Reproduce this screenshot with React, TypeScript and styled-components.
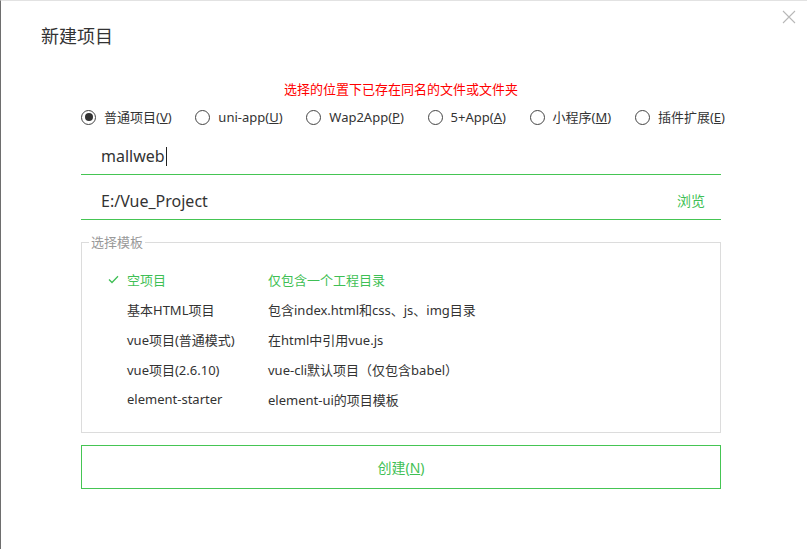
import React from "react";
import styled, { createGlobalStyle } from "styled-components";

const GlobalStyle = createGlobalStyle`
  html, body { margin: 0; padding: 0; background: #fff; }
  body {
    font-family: "Noto Sans", "Noto Sans CJK SC", sans-serif;
    color: #333;
  }
  * { box-sizing: border-box; }
`;

const GREEN = "#3fbf55";
const LINE = "#45c553";

const Dialog = styled.div`
  position: relative;
  width: 807px;
  height: 549px;
  background: #fff;
  border-left: 1px solid #6e6e6e;
  border-top: 1px solid #e2e2e2;
  overflow: hidden;
`;

const Title = styled.div`
  padding: 23px 0 0 40px;
  height: 47px;
  font-size: 18px;
  line-height: 24px;
  color: #333;
`;

const CloseButton = styled.button`
  position: absolute;
  top: 9px;
  right: 11px;
  width: 14px;
  height: 14px;
  padding: 0;
  border: 0;
  background: none;
  cursor: pointer;
  display: flex;
`;

const Content = styled.div`
  margin-left: 80px;
  width: 640px;
`;

const Warning = styled.div`
  margin-top: 32px;
  height: 18px;
  line-height: 18px;
  text-align: center;
  font-size: 13px;
  color: #ff0000;
`;

const RadioRow = styled.div`
  margin-top: 9px;
  height: 20px;
  display: flex;
  align-items: center;
  justify-content: space-between;
  width: 644px;
`;

const RadioItem = styled.label`
  display: flex;
  align-items: center;
  gap: 8px;
  font-size: 13px;
  line-height: 20px;
  color: #333;
  white-space: nowrap;
  cursor: pointer;
`;

const RadioCircle = styled.span<{ $checked?: boolean }>`
  width: 15px;
  height: 15px;
  border-radius: 50%;
  border: 1.3px solid #444;
  display: flex;
  align-items: center;
  justify-content: center;
  &::after {
    content: "";
    width: 8px;
    height: 8px;
    border-radius: 50%;
    background: ${(p) => (p.$checked ? "#333" : "transparent")};
  }
`;

const Field = styled.div<{ $h: number }>`
  height: ${(p) => p.$h}px;
  display: flex;
  align-items: flex-end;
  justify-content: space-between;
  padding: 0 16px 7px 20px;
  border-bottom: 1px solid ${LINE};
`;

const FieldText = styled.span`
  font-size: 16px;
  line-height: 22px;
  color: #333;
  display: flex;
  align-items: center;
`;

const Caret = styled.span`
  display: inline-block;
  width: 1px;
  height: 19px;
  background: #222;
  margin-left: 1px;
`;

const Browse = styled.span`
  font-size: 14px;
  line-height: 22px;
  color: ${GREEN};
  cursor: pointer;
`;

const TemplateBox = styled.fieldset`
  margin: 13px 0 0;
  padding: 13px 0 18px 26px;
  border: 1px solid #dcdcdc;
  min-width: 0;
`;

const Legend = styled.legend`
  margin-left: -19px;
  padding: 0 2px;
  font-size: 13px;
  line-height: 18px;
  color: #999;
`;

const TemplateRow = styled.div<{ $active?: boolean }>`
  display: grid;
  grid-template-columns: 19px 141px 1fr;
  align-items: center;
  height: 30px;
  font-size: 13px;
  color: ${(p) => (p.$active ? GREEN : "#333")};
`;

const CheckCell = styled.span`
  display: flex;
  align-items: center;
`;

const CreateButton = styled.button`
  margin-top: 12px;
  width: 640px;
  height: 44px;
  border: 1px solid ${LINE};
  background: #fff;
  color: ${GREEN};
  font-family: inherit;
  font-size: 14px;
  cursor: pointer;
  padding: 0;
`;

const radios = [
  { label: "普通项目", key: "V", checked: true },
  { label: "uni-app", key: "U" },
  { label: "Wap2App", key: "P" },
  { label: "5+App", key: "A" },
  { label: "小程序", key: "M" },
  { label: "插件扩展", key: "E" },
];

const templates = [
  { name: "空项目", desc: "仅包含一个工程目录", active: true },
  { name: "基本HTML项目", desc: "包含index.html和css、js、img目录" },
  { name: "vue项目(普通模式)", desc: "在html中引用vue.js" },
  { name: "vue项目(2.6.10)", desc: "vue-cli默认项目（仅包含babel）" },
  { name: "element-starter", desc: "element-ui的项目模板" },
];

export default function App() {
  return (
    <>
      <GlobalStyle />
      <Dialog>
        <Title>新建项目</Title>
        <CloseButton aria-label="关闭">
          <svg width="14" height="14" viewBox="0 0 14 14">
            <path d="M1 1 L13 13 M13 1 L1 13" stroke="#b8b8b8" strokeWidth="1.1" fill="none" />
          </svg>
        </CloseButton>
        <Content>
          <Warning>选择的位置下已存在同名的文件或文件夹</Warning>
          <RadioRow>
            {radios.map((r) => (
              <RadioItem key={r.key}>
                <RadioCircle $checked={r.checked} />
                <span>
                  {r.label}(<u>{r.key}</u>)
                </span>
              </RadioItem>
            ))}
          </RadioRow>
          <Field $h={48}>
            <FieldText>
              mallweb
              <Caret />
            </FieldText>
          </Field>
          <Field $h={45}>
            <FieldText>E:/Vue_Project</FieldText>
            <Browse>浏览</Browse>
          </Field>
          <TemplateBox>
            <Legend>选择模板</Legend>
            {templates.map((t) => (
              <TemplateRow key={t.name} $active={t.active}>
                <CheckCell>
                  {t.active && (
                    <svg width="11" height="9" viewBox="0 0 11 9">
                      <path d="M1 4.5 L4 7.5 L10 1.2" stroke={GREEN} strokeWidth="1.3" fill="none" />
                    </svg>
                  )}
                </CheckCell>
                <span>{t.name}</span>
                <span>{t.desc}</span>
              </TemplateRow>
            ))}
          </TemplateBox>
          <CreateButton>
            创建(<u>N</u>)
          </CreateButton>
        </Content>
      </Dialog>
    </>
  );
}
